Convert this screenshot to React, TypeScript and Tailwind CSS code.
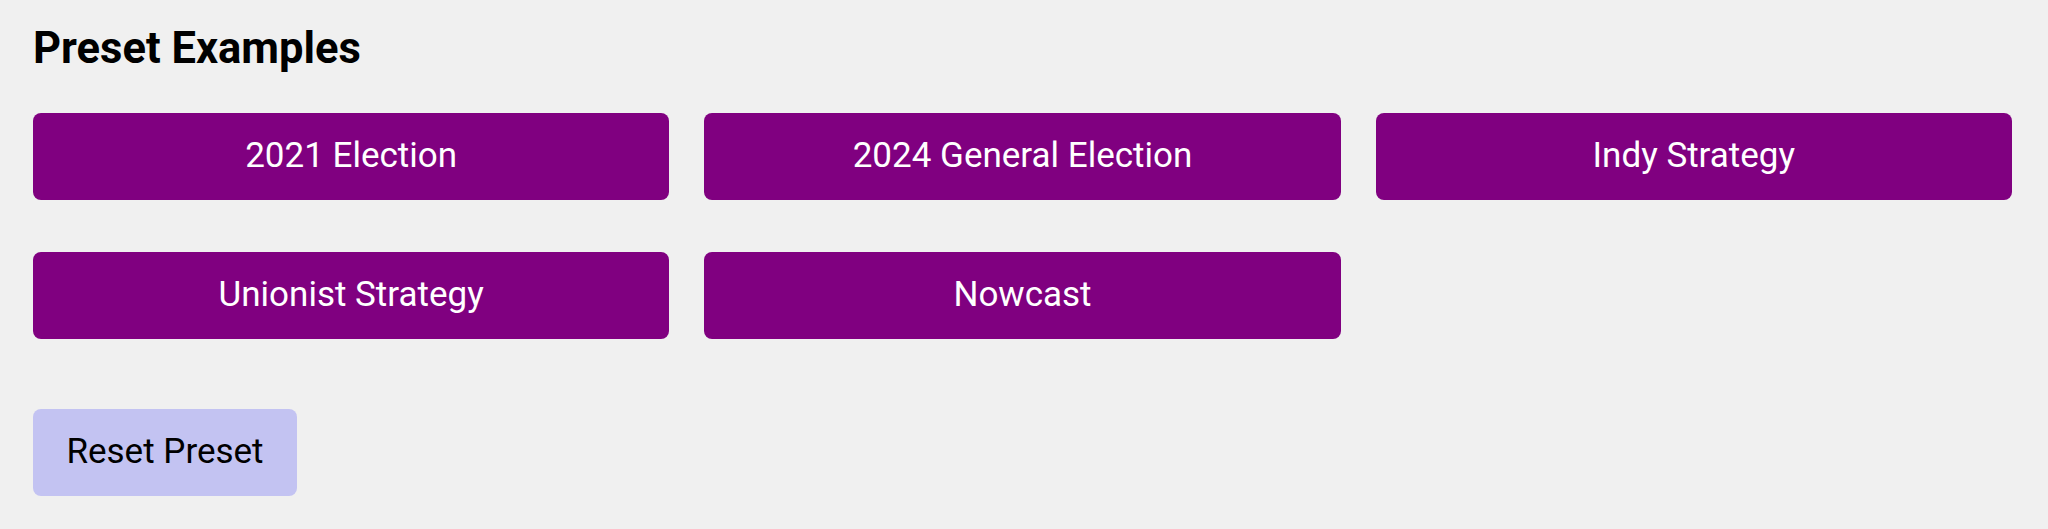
import React from 'react'

const presets = [
  '2021 Election',
  '2024 General Election',
  'Indy Strategy',
  'Unionist Strategy',
  'Nowcast',
]

export default function App() {
  return (
    <div
      className="min-h-[529px] bg-[#f0f0f0] pt-[27px] pl-[33px] pr-[36px] text-black"
      style={{ fontFamily: 'Roboto, "Liberation Sans", sans-serif' }}
    >
      <h2 className="text-[43.5px] leading-[43px] font-bold">Preset Examples</h2>

      <div className="mt-[43px] grid grid-cols-3 gap-x-[35px] gap-y-[52px]">
        {presets.map((name) => (
          <button
            key={name}
            className="flex h-[87px] items-center justify-center rounded-[8px] bg-[#800080] text-[35px] text-white"
          >
            {name}
          </button>
        ))}
      </div>

      <button className="mt-[70px] flex h-[87px] w-[264px] items-center justify-center rounded-[8px] bg-[#c3c3f2] text-[35px] text-black">
        Reset Preset
      </button>
    </div>
  )
}
